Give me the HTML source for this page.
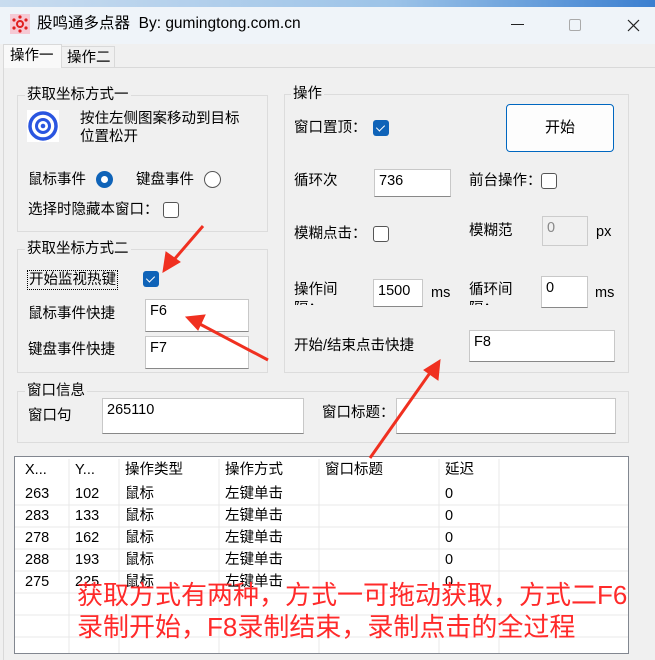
<!DOCTYPE html>
<html><head><meta charset="utf-8"><style>
*{margin:0;padding:0;box-sizing:border-box}
body{width:655px;height:660px;overflow:hidden;background:#f0f0f0;font-family:"Liberation Sans","Noto Sans CJK SC",sans-serif;font-size:14.5px;color:#000;position:relative}
.a{position:absolute;white-space:nowrap}
.t{line-height:18px}
.grp{position:absolute;border:1px solid #dcdcdc}
.lbl{position:absolute;background:#f0f0f0;padding:0 2px;line-height:18px}
.tb{position:absolute;background:#fff;border:1px solid #c8c8c8;border-bottom-color:#888;padding:2px 4px;line-height:18px}
.cb{position:absolute;width:16px;height:16px;border:1px solid #555;border-radius:3px;background:#fff}
.cbon{position:absolute;width:16px;height:16px;border-radius:3px;background:#0f63b8}
.cbon:after{content:"";position:absolute;left:5px;top:3px;width:4px;height:7px;border:solid #fff;border-width:0 1.5px 1.5px 0;transform:rotate(45deg)}
</style></head><body>
<div class="a" style="left:0;top:0;width:655px;height:7px;background:linear-gradient(90deg,#c9dcef,#9cc3e8 60%,#3b7fd0)"></div>
<div class="a" style="left:0;top:7px;width:655px;height:37px;background:#eff4f9"></div>
<svg class="a" style="left:10px;top:14px" width="20" height="20"><rect width="20" height="20" fill="#f6c9d4"/><g fill="#e02020"><circle cx="10" cy="3" r="1.6"/><circle cx="16" cy="6" r="1.6"/><circle cx="16" cy="14" r="1.6"/><circle cx="10" cy="17" r="1.6"/><circle cx="4" cy="14" r="1.6"/><circle cx="4" cy="6" r="1.6"/></g><circle cx="10" cy="10" r="3" fill="none" stroke="#e02020" stroke-width="2"/></svg>
<div class="a" style="left:37px;top:14px;font-size:15.5px;line-height:20px">股鸣通多点器 &nbsp;By:&nbsp;gumingtong.com.cn</div>
<div class="a" style="left:511px;top:24px;width:13px;height:1px;background:#222"></div>
<div class="a" style="left:569px;top:19px;width:12px;height:12px;border:1px solid #aaa;border-radius:2px"></div>
<svg class="a" style="left:627px;top:19px" width="13" height="13"><path d="M1 1L12 12M12 1L1 12" stroke="#222" stroke-width="1.2"/></svg>
<!-- tabs -->
<div class="a" style="left:3px;top:67px;width:652px;height:593px;border-top:1px solid #d9d9d9;border-left:1px solid #d9d9d9"></div>
<div class="a t" style="left:61px;top:46px;width:54px;height:22px;border:1px solid #d9d9d9;background:#f0f0f0;padding:2px 5px">操作二</div>
<div class="a t" style="left:3px;top:44px;width:59px;height:24px;border:1px solid #d9d9d9;border-bottom:none;background:#f9f9f9;padding:2px 6px">操作一</div>
<!-- group1 -->
<div class="grp" style="left:17px;top:95px;width:251px;height:137px"></div>
<div class="lbl" style="left:25px;top:86px">获取坐标方式一</div>
<svg class="a" style="left:27px;top:110px" width="32" height="32"><rect width="32" height="32" fill="#fff"/><circle cx="16" cy="16" r="13" fill="none" stroke="#2a55e0" stroke-width="3.5"/><circle cx="16" cy="16" r="6.5" fill="none" stroke="#2a55e0" stroke-width="3"/><circle cx="16" cy="16" r="2.3" fill="#2a55e0"/></svg>
<div class="a t" style="left:80px;top:110px">按住左侧图案移动到目标</div>
<div class="a t" style="left:80px;top:128px">位置松开</div>
<div class="a t" style="left:28px;top:171px">鼠标事件</div>
<div class="a" style="left:96px;top:171px;width:17px;height:17px;border-radius:50%;background:#0f63b8"><div class="a" style="left:5px;top:5px;width:7px;height:7px;border-radius:50%;background:#fff"></div></div>
<div class="a t" style="left:136px;top:171px">键盘事件</div>
<div class="a" style="left:204px;top:171px;width:17px;height:17px;border-radius:50%;border:1px solid #555;background:#fff"></div>
<div class="a t" style="left:28px;top:201px">选择时隐藏本窗口：</div>
<div class="cb" style="left:163px;top:202px"></div>
<!-- group2 -->
<div class="grp" style="left:17px;top:249px;width:251px;height:124px"></div>
<div class="lbl" style="left:25px;top:240px">获取坐标方式二</div>
<div class="a t" style="left:27px;top:270px;border:1px dotted #000;padding:0 1px">开始监视热键</div>
<div class="cbon" style="left:143px;top:271px"></div>
<div class="a t" style="left:28px;top:305px">鼠标事件快捷</div>
<div class="tb" style="left:145px;top:299px;width:104px;height:33px">F6</div>
<div class="a t" style="left:28px;top:341px">键盘事件快捷</div>
<div class="tb" style="left:145px;top:336px;width:104px;height:33px">F7</div>
<!-- group op -->
<div class="grp" style="left:284px;top:94px;width:345px;height:279px"></div>
<div class="lbl" style="left:291px;top:85px">操作</div>
<div class="a t" style="left:294px;top:119px">窗口置顶：</div>
<div class="cbon" style="left:373px;top:120px"></div>
<div class="a" style="left:506px;top:104px;width:108px;height:48px;border:1px solid #0067c0;border-radius:4px;background:#fdfdfd;text-align:center;line-height:46px;font-size:15px">开始</div>
<div class="a t" style="left:294px;top:172px">循环次</div>
<div class="tb" style="left:374px;top:169px;width:77px;height:28px">736</div>
<div class="a t" style="left:469px;top:172px">前台操作：</div>
<div class="cb" style="left:541px;top:173px"></div>
<div class="a t" style="left:294px;top:225px">模糊点击：</div>
<div class="cb" style="left:373px;top:226px"></div>
<div class="a t" style="left:469px;top:222px">模糊范</div>
<div class="tb" style="left:542px;top:216px;width:46px;height:30px;background:#f0f0f0;border-color:#ccc;color:#888">0</div>
<div class="a t" style="left:596px;top:223px">px</div>
<div class="a" style="left:294px;top:281px;height:19px;overflow:hidden;line-height:19px">操作间</div>
<div class="a" style="left:294px;top:300px;height:5px;overflow:hidden;line-height:19px">隔：</div>
<div class="tb" style="left:373px;top:279px;width:50px;height:28px">1500</div>
<div class="a t" style="left:431px;top:284px">ms</div>
<div class="a" style="left:469px;top:281px;height:19px;overflow:hidden;line-height:19px">循环间</div>
<div class="a" style="left:469px;top:300px;height:5px;overflow:hidden;line-height:19px">隔：</div>
<div class="tb" style="left:541px;top:276px;width:47px;height:32px">0</div>
<div class="a t" style="left:595px;top:284px">ms</div>
<div class="a t" style="left:294px;top:337px">开始/结束点击快捷</div>
<div class="tb" style="left:469px;top:330px;width:146px;height:32px">F8</div>
<!-- window info -->
<div class="grp" style="left:17px;top:391px;width:612px;height:52px"></div>
<div class="lbl" style="left:25px;top:382px">窗口信息</div>
<div class="a t" style="left:28px;top:407px">窗口句</div>
<div class="tb" style="left:102px;top:398px;width:202px;height:36px">265110</div>
<div class="a t" style="left:322px;top:404px">窗口标题：</div>
<div class="tb" style="left:396px;top:398px;width:220px;height:36px"></div>
<!-- list -->
<div class="a" style="left:14px;top:456px;width:615px;height:198px;background:#fff;border:1px solid #828790;overflow:hidden">
<svg class="a" style="left:0;top:0" width="613" height="196">
<g stroke="#e8e8e8"><path d="M54 2V196M104 2V196M204 2V196M304 2V196M424 2V196M484 2V196"/>
<path d="M0 48H613M0 70H613M0 92H613M0 114H613M0 136H613M0 158H613M0 180H613"/></g>
</svg>
<div class="a" style="left:0;top:0;width:613px;line-height:26px">
<span class="a" style="left:10px">X...</span><span class="a" style="left:60px">Y...</span><span class="a" style="left:110px">操作类型</span><span class="a" style="left:210px">操作方式</span><span class="a" style="left:310px">窗口标题</span><span class="a" style="left:430px">延迟</span></div>
<div class="a" style="left:0;top:26px;line-height:22px">
<div style="position:relative;height:22px"><span class="a" style="left:10px">263</span><span class="a" style="left:60px">102</span><span class="a" style="left:110px">鼠标</span><span class="a" style="left:210px">左键单击</span><span class="a" style="left:430px">0</span></div>
<div style="position:relative;height:22px"><span class="a" style="left:10px">283</span><span class="a" style="left:60px">133</span><span class="a" style="left:110px">鼠标</span><span class="a" style="left:210px">左键单击</span><span class="a" style="left:430px">0</span></div>
<div style="position:relative;height:22px"><span class="a" style="left:10px">278</span><span class="a" style="left:60px">162</span><span class="a" style="left:110px">鼠标</span><span class="a" style="left:210px">左键单击</span><span class="a" style="left:430px">0</span></div>
<div style="position:relative;height:22px"><span class="a" style="left:10px">288</span><span class="a" style="left:60px">193</span><span class="a" style="left:110px">鼠标</span><span class="a" style="left:210px">左键单击</span><span class="a" style="left:430px">0</span></div>
<div style="position:relative;height:22px"><span class="a" style="left:10px">275</span><span class="a" style="left:60px">225</span><span class="a" style="left:110px">鼠标</span><span class="a" style="left:210px">左键单击</span><span class="a" style="left:430px">0</span></div>
</div>
</div>
<div class="a" style="left:77px;top:579px;color:#ff2a2a;font-size:26px;line-height:32px">获取方式有两种，方式一可拖动获取，方式二F6<br>录制开始，F8录制结束，录制点击的全过程</div>
<!-- arrows -->
<svg class="a" style="left:0;top:0" width="655" height="660">
<g fill="#f03020" stroke="#f03020">
<path d="M203 226L172 262" stroke-width="3"/><path d="M163 272L166 252L180 262Z" stroke-width="1"/>
<path d="M268 360L196 322" stroke-width="3"/><path d="M186 317L205 315L198 330Z" stroke-width="1"/>
<path d="M370 458L432 370" stroke-width="3"/><path d="M440 360L438 380L424 370Z" stroke-width="1"/>
</g></svg>
</body></html>
